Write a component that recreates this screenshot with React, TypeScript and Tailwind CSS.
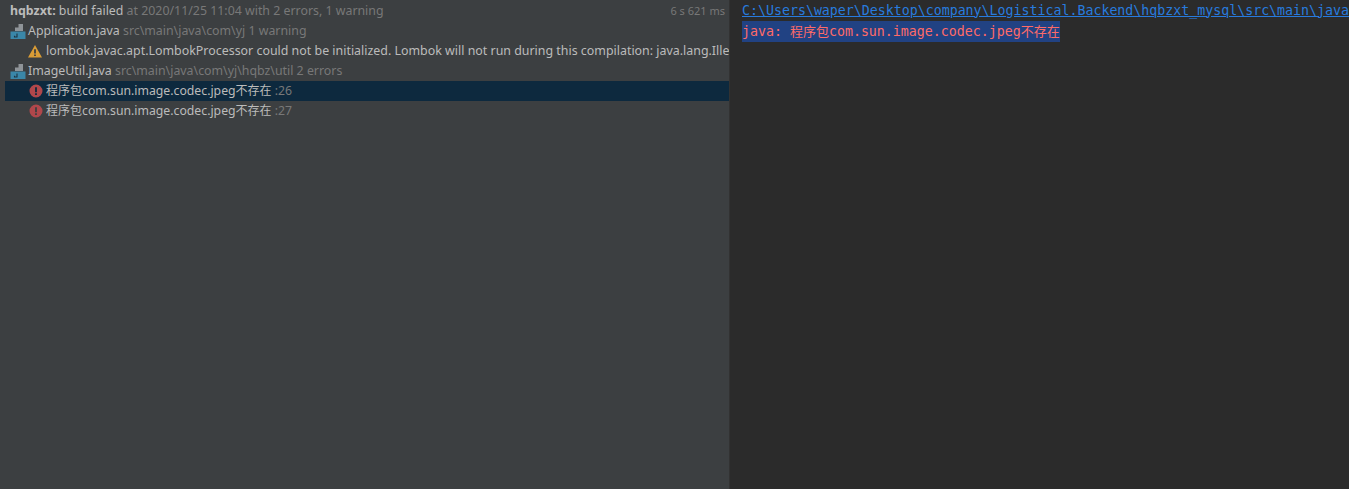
const sans = "font-['Noto_Sans','Noto_Sans_CJK_SC',sans-serif]";

function FileIcon() {
  return (
    <svg width="16" height="16" viewBox="0 0 16 16" className="shrink-0">
      <path d="M8.5 1H13v7H5V4.5h3.5z" fill="#8f9498" />
      <path d="M0.5 8.5h15V16H0.5z" fill="#3a87a9" />
      <path d="M7 10.5v3.5H4.5v-1.2" fill="none" stroke="#1d3442" strokeWidth="1.1" />
    </svg>
  );
}

function WarnIcon() {
  return (
    <svg width="14" height="14" viewBox="0 0 14 14" className="shrink-0">
      <path
        fillRule="evenodd"
        d="M7 1l7 12.5H0zM6.1 5.2v4.3h1.8V5.2zM6.1 10.4v1.7h1.8v-1.7z"
        fill="#d99c36"
      />
    </svg>
  );
}

function ErrorIcon() {
  return (
    <svg width="14" height="14" viewBox="0 0 14 14" className="shrink-0">
      <path
        fillRule="evenodd"
        d="M7 .5a6.5 6.5 0 1 0 0 13 6.5 6.5 0 0 0 0-13zM6.1 3.2v5h1.8v-5zM6.1 9.2V11h1.8V9.2z"
        fill="#b0474b"
      />
    </svg>
  );
}

function Row({ selected, children }: { selected?: boolean; children: React.ReactNode }) {
  return (
    <div className={`flex h-5 items-center whitespace-nowrap overflow-hidden ${selected ? "bg-[#0d293e]" : ""}`}>
      {children}
    </div>
  );
}

function Cjk({ children }: { children: React.ReactNode }) {
  return <span className="font-['Noto_Sans_CJK_SC',sans-serif] text-[13px]">{children}</span>;
}

function ErrText({ line }: { line: string }) {
  return (
    <span className="text-[12.25px]">
      <span className="text-[12px]">程序包</span>com.sun.image.codec.jpeg<span className="text-[12px]">不存在</span>{" "}
      <span className="text-[#787878]">{line}</span>
    </span>
  );
}

export default function App() {
  return (
    <div className={`flex h-[489px] w-[1349px] overflow-hidden bg-[#2b2b2b] ${sans} text-[12.37px]`}>
      <div className="flex w-[729px] shrink-0 flex-col bg-[#3c3f41] pl-[5px] pt-px text-[#bbbbbb]">
        <Row>
          <div className="flex w-full items-center justify-between pl-[5px] pr-[4px]">
            <span>
              <span className="font-bold">hqbzxt:</span> build failed{" "}
              <span className="text-[#787878]">at 2020/11/25 11:04 with 2 errors, 1 warning</span>
            </span>
            <span className="text-[11px] text-[#787878]">6 s 621 ms</span>
          </div>
        </Row>
        <Row>
          <div className="flex items-center gap-[2px] pl-[5px]">
            <FileIcon />
            <span>
              Application.java <span className="text-[#787878]">src\main\java\com\yj 1 warning</span>
            </span>
          </div>
        </Row>
        <Row>
          <div className="flex items-center gap-[4px] pl-[23px]">
            <WarnIcon />
            <span className="text-[12.42px]">
              lombok.javac.apt.LombokProcessor could not be initialized. Lombok will not run during this compilation: java.lang.Ille
            </span>
          </div>
        </Row>
        <Row>
          <div className="flex items-center gap-[2px] pl-[5px]">
            <FileIcon />
            <span>
              ImageUtil.java <span className="text-[#787878]">src\main\java\com\yj\hqbz\util 2 errors</span>
            </span>
          </div>
        </Row>
        <Row selected>
          <div className="flex items-center gap-[3px] pl-[24px]">
            <ErrorIcon />
            <ErrText line=":26" />
          </div>
        </Row>
        <Row>
          <div className="flex items-center gap-[3px] pl-[24px]">
            <ErrorIcon />
            <ErrText line=":27" />
          </div>
        </Row>
      </div>
      <div className="w-px shrink-0 bg-[#323232]" />
      <div className="min-w-0 flex-1 overflow-hidden pl-3 font-['DejaVu_Sans_Mono',monospace] text-[13.28px]">
        <div className="flex h-[21px] items-center whitespace-nowrap text-[#287bde] underline">
          C:\Users\waper\Desktop\company\Logistical.Backend\hqbzxt_mysql\src\main\java
        </div>
        <div className="flex h-[21px] whitespace-nowrap">
          <span className="block h-[21px] overflow-hidden bg-[#214283] leading-[20px] whitespace-pre text-[#ff6b68]">
            java: <Cjk>程序包</Cjk>com.sun.image.codec.jpeg<Cjk>不存在</Cjk>
          </span>
        </div>
      </div>
    </div>
  );
}
